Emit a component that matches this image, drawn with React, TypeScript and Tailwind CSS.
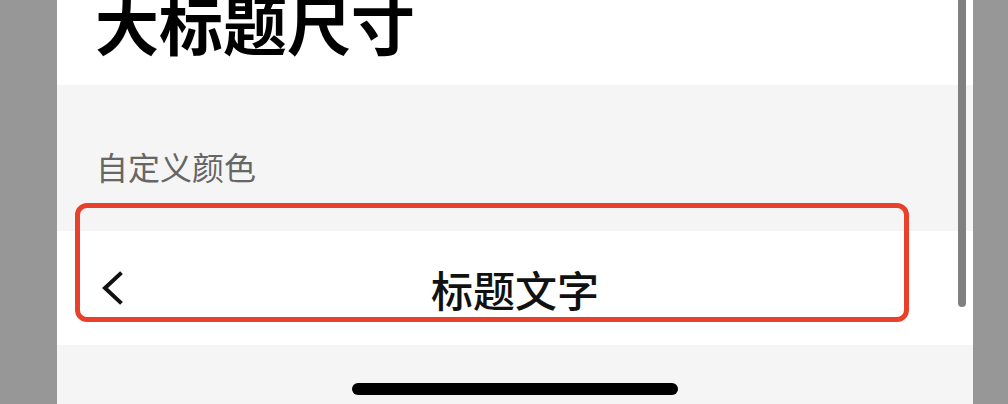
import React from 'react';

const cjk = '"Noto Sans CJK SC", "Noto Sans", sans-serif';

export default function App() {
  return (
    <div className="flex h-[404px] w-[1008px] overflow-hidden bg-[#979797]" style={{ fontFamily: cjk }}>
      <div className="w-[57px] shrink-0" />

      {/* Phone screen */}
      <div className="relative flex w-[916px] shrink-0 flex-col bg-white">
        <div className="h-[85px] shrink-0 overflow-hidden bg-white pl-[38px]">
          <h1 className="mt-[-10px] text-[64px] font-semibold leading-[64px] text-black">大标题尺寸</h1>
        </div>

        <div className="h-[146px] shrink-0 bg-[#f5f5f5] pl-[39px] pt-[65px]">
          <p className="text-[32px] leading-[32px] text-[#666666]">自定义颜色</p>
        </div>

        {/* Nav bar */}
        <div className="grid h-[114px] shrink-0 grid-cols-[1fr_auto_1fr] items-center bg-white">
          <div className="pl-[45px]">
            <svg width="22" height="34" viewBox="0 0 22 34" fill="none" className="block">
              <polyline
                points="18,3 3,17 18,31"
                stroke="#111"
                strokeWidth="4"
                strokeLinecap="square"
                strokeLinejoin="miter"
              />
            </svg>
          </div>
          <h2 className="mt-[1px] text-[42px] font-medium leading-[42px] text-[#111]">标题文字</h2>
          <div />
        </div>

        <div className="flex flex-1 justify-center bg-[#f5f5f5] pt-[38px]">
          <div className="h-[12px] w-[326px] rounded-full bg-black" />
        </div>

        {/* Scrollbar */}
        <div className="absolute right-[7px] top-0 h-[307px] w-[8px] rounded-b-full bg-[#808080]" />

        {/* Highlight annotation */}
        <div className="absolute left-[18px] top-[203px] h-[119px] w-[834px] rounded-[12px] border-[5px] border-[#e8402a]" />
      </div>

      <div className="flex-1" />
    </div>
  );
}
